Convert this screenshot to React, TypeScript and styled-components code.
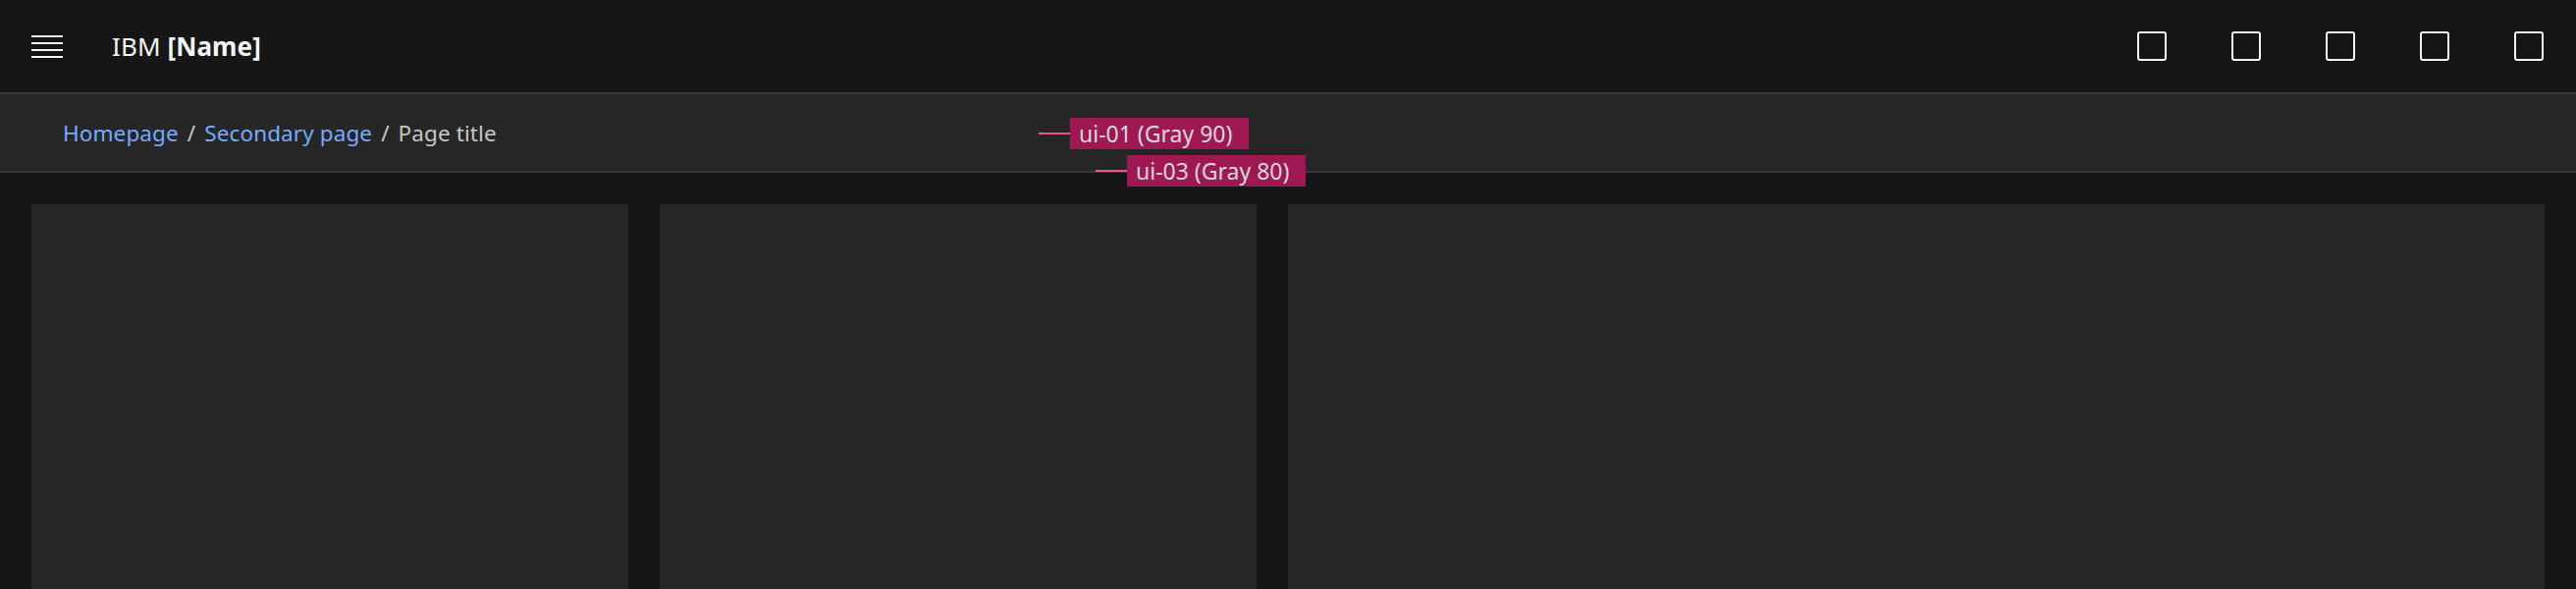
import React from "react";
import styled, { createGlobalStyle } from "styled-components";

const GlobalStyle = createGlobalStyle`
  html, body {
    margin: 0;
    padding: 0;
    background: #161616;
    font-family: "Noto Sans", "Liberation Sans", sans-serif;
  }
`;

const Page = styled.div`
  position: relative;
  width: 2624px;
  min-height: 600px;
  background: #161616;
  overflow: hidden;
`;

const Header = styled.header`
  display: flex;
  align-items: center;
  height: 94px;
  border-bottom: 2px solid #393939;
  background: #161616;
`;

const MenuButton = styled.button`
  display: flex;
  align-items: center;
  justify-content: center;
  width: 96px;
  height: 94px;
  padding: 0;
  border: 0;
  background: transparent;
`;

const Brand = styled.div`
  margin-left: 18px;
  color: #f4f4f4;
  font-size: 26px;
  letter-spacing: 0.1px;

  strong {
    font-weight: 700;
  }
`;

const Actions = styled.div`
  display: flex;
  margin-left: auto;
`;

const ActionButton = styled.button`
  display: flex;
  align-items: center;
  justify-content: center;
  width: 96px;
  height: 94px;
  padding: 0;
  border: 0;
  background: transparent;
`;

const SquareIcon = styled.span`
  display: block;
  width: 30px;
  height: 30px;
  box-sizing: border-box;
  border: 2px solid #f4f4f4;
  border-radius: 3px;
`;

const BreadcrumbBar = styled.nav`
  display: flex;
  align-items: center;
  height: 78px;
  padding-left: 64px;
  background: #262626;
  border-bottom: 2px solid #393939;
  font-size: 22.5px;
  letter-spacing: 0.1px;
`;

const Crumb = styled.span<{ $current?: boolean }>`
  color: ${(p) => (p.$current ? "#c6c6c6" : "#78a9ff")};
`;

const Separator = styled.span`
  margin: 0 9px;
  color: #c6c6c6;
`;

const Content = styled.main`
  display: grid;
  grid-template-columns: 608px 608px 1fr;
  gap: 32px;
  padding: 32px;
`;

const Tile = styled.div`
  height: 420px;
  background: #262626;
`;

const Annotation = styled.div<{ $top: number; $left: number }>`
  position: absolute;
  top: ${(p) => p.$top}px;
  left: ${(p) => p.$left}px;
  display: flex;
  align-items: center;
`;

const Leader = styled.span`
  width: 32px;
  height: 2px;
  background: #ee5396;
`;

const Tag = styled.span`
  width: 182px;
  height: 32px;
  box-sizing: border-box;
  padding: 0 9px;
  display: flex;
  align-items: center;
  background: #9f1853;
  color: #d8d8d8;
  font-size: 23px;
  white-space: nowrap;
`;

const HamburgerIcon = () => (
  <svg width="32" height="32" viewBox="0 0 32 32" fill="#f4f4f4">
    <rect x="0" y="5" width="32" height="2" />
    <rect x="0" y="12" width="32" height="2" />
    <rect x="0" y="19" width="32" height="2" />
    <rect x="0" y="26" width="32" height="2" />
  </svg>
);

const App = () => (
  <Page>
    <GlobalStyle />
    <Header>
      <MenuButton aria-label="Menu">
        <HamburgerIcon />
      </MenuButton>
      <Brand>
        IBM <strong>[Name]</strong>
      </Brand>
      <Actions>
        {[0, 1, 2, 3, 4].map((i) => (
          <ActionButton key={i}>
            <SquareIcon />
          </ActionButton>
        ))}
      </Actions>
    </Header>
    <BreadcrumbBar>
      <Crumb>Homepage</Crumb>
      <Separator>/</Separator>
      <Crumb>Secondary page</Crumb>
      <Separator>/</Separator>
      <Crumb $current>Page title</Crumb>
    </BreadcrumbBar>
    <Content>
      <Tile />
      <Tile />
      <Tile />
    </Content>
    <Annotation $top={120} $left={1058}>
      <Leader />
      <Tag>ui-01 (Gray 90)</Tag>
    </Annotation>
    <Annotation $top={158} $left={1116}>
      <Leader />
      <Tag>ui-03 (Gray 80)</Tag>
    </Annotation>
  </Page>
);

export default App;
